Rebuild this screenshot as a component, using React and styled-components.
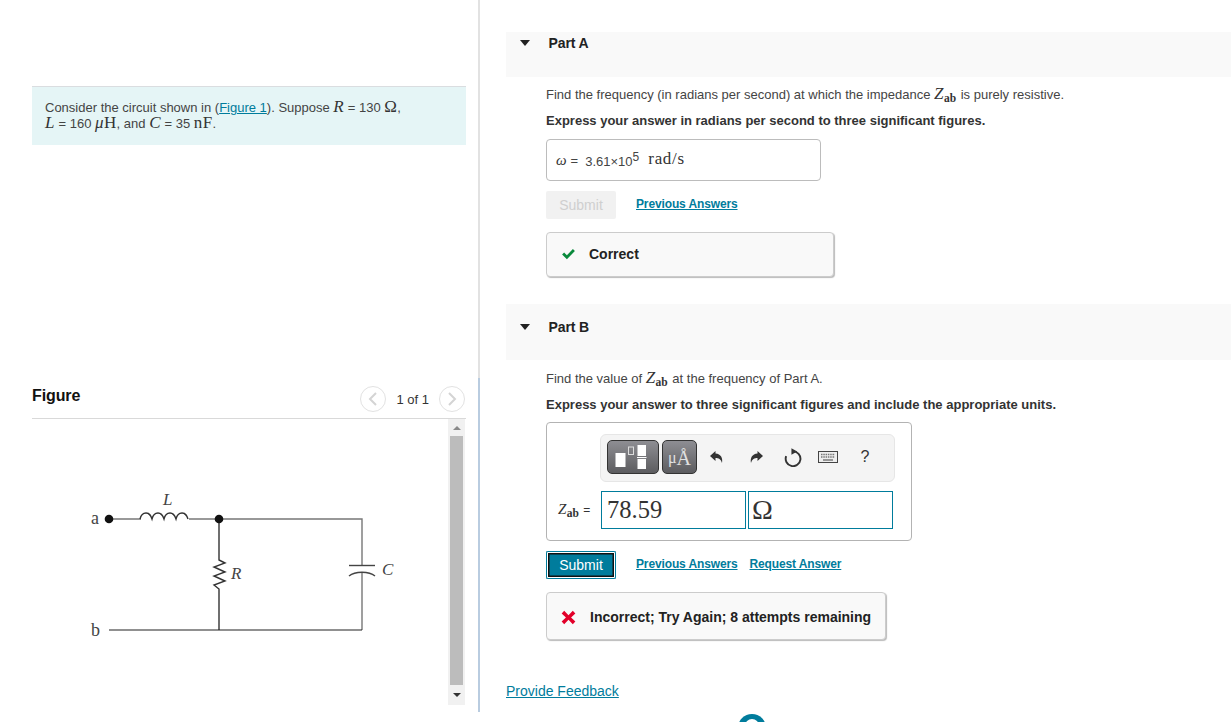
import React from "react";
import styled, { createGlobalStyle } from "styled-components";

const Global = createGlobalStyle`
  html, body { margin: 0; padding: 0; background: #fff; overflow: hidden; }
  body { font-family: "Liberation Sans", Arial, sans-serif; color: #333; }
`;
const Page = styled.div`display: flex; width: 1231px; height: 722px; overflow: hidden; position: relative;`;
const LeftPane = styled.section`width: 434px; padding: 86px 12px 0 32px; flex: none;`;
const Divider = styled.div`width: 2px; margin-right: 26px; flex: none; display: flex; flex-direction: column; height: 712px;`;
const DividerPart = styled.div`height: ${p => p.$h}px; background: ${p => p.$c}; flex: none;`;
const Intro = styled.div`
  height: 45px; padding: 13px 13px 0; background: #e5f5f6; border-top: 1px solid #dadde0;
  font-size: 13px; line-height: 16px; color: #444; width: 408px; box-sizing: content-box;
`;
const A = styled.a`color: #007c9c; text-decoration: underline;`;
const M = styled.span`font-family: "Liberation Serif", serif; font-size: 17px; letter-spacing: .4px; color: #333; line-height: 0;`;
const MI = styled(M)`font-style: italic;`;
const FigureHead = styled.header`
  margin-top: 234px; height: 39px; display: flex; align-items: flex-start; justify-content: space-between;
  border-bottom: 1px solid #d9d9d9; box-sizing: content-box;
`;
const FigureTitle = styled.h2`margin: 8px 0 0; font-size: 16px; line-height: 18px; font-weight: 700; color: #111; letter-spacing: -.1px;`;
const Pager = styled.div`display: flex; align-items: center; gap: 10px; margin: 7px 1px 0 0; font-size: 13px; color: #333;`;
const PageBtn = styled.span`width: 24px; height: 24px; border: 1px solid #e2e2e2; border-radius: 50%; display: flex; align-items: center; justify-content: center;`;
const FigureBody = styled.div`display: flex; height: 286px;`;
const Canvas = styled.div`flex: 1; min-width: 0;`;
const ScrollBar = styled.div`width: 17px; background: #f1f1f1; display: flex; flex-direction: column; align-items: center; flex: none; margin-right: 1px; box-sizing: border-box; padding: 7px 0 8px;`;
const Thumb = styled.div`width: 13px; height: 249px; background: #bcbcbc; margin: 6px 0;`;
const Tri = styled.span`width: 0; height: 0; border-left: 4px solid transparent; border-right: 4px solid transparent; ${p => p.$up ? "border-bottom: 4px solid #8a8a8a;" : "border-top: 4px solid #333;"} flex: none;`;
const TriSpacer = styled.div`flex: 1;`;

const RightPane = styled.main`flex: 1; min-width: 0; padding-top: 32px;`;
const PartHead = styled.div`
  height: ${p => p.$h}px; background: #f9f9f9; display: flex; align-items: flex-start; padding: ${p => p.$pt}px 0 0 14px; box-sizing: border-box;
  margin-top: ${p => p.$mt || 0}px; font-size: 14px; font-weight: 700; color: #222; line-height: 16px; letter-spacing: -.1px;
`;
const PartTitle = styled.span`margin-left: 18.5px;`;
const Caret = styled.span`width: 0; height: 0; margin-top: 5px; border-left: 5.5px solid transparent; border-right: 5.5px solid transparent; border-top: 6px solid #222;`;
const PartBody = styled.div`padding-left: 40px;`;
const Prompt = styled.p`margin: ${p => p.$mt}px 0 0; font-size: 13px; line-height: 16px; color: #444; white-space: nowrap;`;
const Strong = styled.p`margin: 10px 0 0; font-size: 13px; line-height: 16px; color: #333; font-weight: 700; white-space: nowrap;`;
const AnswerBox = styled.div`
  margin-top: 10px; width: 275px; height: 42px; box-sizing: border-box; border: 1px solid #bcbcbc; border-radius: 4px;
  display: flex; align-items: center; padding-left: 9px; font-size: 13px; color: #444; white-space: pre;
`;
const AnswerVar = styled(MI)`font-size: 15px;`;
const Sup = styled.sup`font-size: 12px; line-height: 0; vertical-align: 5px;`;
const Num = styled.span`margin: 2px 9px 0 7px;`;
const Unit = styled(M)`font-size: 17px; letter-spacing: .7px; padding-bottom: 2px;`;
const Actions = styled.div`display: flex; align-items: flex-start; margin-top: ${p => p.$mt}px;`;
const SubmitBtn = styled.button`
  width: 70px; height: 28px; padding: 0; border: 0; font: 14px "Liberation Sans", Arial, sans-serif; border-radius: 2px;
  background: ${p => p.$on ? "#007c9c" : "#f1f1f1"}; color: ${p => p.$on ? "#fff" : "#cfcfcf"};
  ${p => p.$on && "box-shadow: inset 0 0 0 1px #007c9c, inset 0 0 0 2px #fff, inset 0 0 0 3.5px #111;"}
`;
const ActionLink = styled(A)`font-size: 12px; font-weight: 700; line-height: 14px; margin: 6px 0 0 ${p => p.$ml}px; letter-spacing: -.13px;`;
const Feedback = styled.div`
  margin-top: ${p => p.$mt}px; width: ${p => p.$w}px; height: ${p => p.$h}px; box-sizing: border-box; display: flex; align-items: center;
  padding: ${p => p.$pt || 0}px 0 ${p => p.$pb || 0}px 14px; gap: ${p => p.$gap}px; background: #f9f9f9; border: 1px solid #ccc; border-radius: 4px;
  box-shadow: 1px 1px 1px #bbb; font-size: 14px; font-weight: 700; color: #222; white-space: nowrap;
`;
const WorkBox = styled.div`
  margin-top: 9px; width: 366px; height: 119px; box-sizing: border-box; border: 1px solid #b3b3b3; border-radius: 4px;
  padding: 11px 0 0 53px;
`;
const Toolbar = styled.div`
  width: 295px; height: 48px; box-sizing: border-box; background: #f4f4f4; border: 1px solid #e6e6e6; border-radius: 6px;
  display: flex; align-items: center; padding: 0 0 2px 6px;
`;
const TemplateBtn = styled.span`
  width: ${p => p.$w}px; height: 34px; box-sizing: border-box; margin-right: 3px; border: 1px solid #333; border-radius: 5px;
  background: linear-gradient(#8e8e93, #5c5c5f); display: flex; align-items: center; justify-content: center; color: #e0e0e0;
  font-family: "Liberation Serif", serif; font-size: 16px; flex: none; padding-top: 2px;
`;
const BigA = styled.span`font-size: 20px; line-height: 20px;`;
const ToolIcon = styled.span`width: ${p => p.$w}px; display: flex; justify-content: center; flex: none; color: #333; font-size: 16px;`;
const Entry = styled.div`display: flex; align-items: center; margin: 9px 0 0 -42px;`;
const ZLabel = styled.span`width: 43px; font-size: 12px; white-space: nowrap; color: #333; flex: none;`;
const ZM = styled(MI)`font-size: 15px;`;
const Field = styled.div`
  width: 145px; height: 38px; box-sizing: border-box; border: 1px solid #007c9c; margin-right: 2px; padding-left: ${p => p.$pl}px;
  font-family: "Liberation Serif", serif; font-size: ${p => p.$fs}px; line-height: 36px; color: #333;
`;
const FeedbackLink = styled(A)`display: inline-block; font-size: 14px; line-height: 16px; margin: 43px 0 0 0;`;
const HelpDot = styled.div`position: absolute; left: 738px; top: 714px; width: 28px; height: 28px; border-radius: 50%; background: #007c9c;`;
const HelpInner = styled.div`position: absolute; left: 745px; top: 719px; width: 14px; height: 14px; border-radius: 50%; background: #fff;`;
const Sub = styled.sub`font-family: "Liberation Serif", serif; font-size: 11.5px; font-weight: 700; line-height: 0; vertical-align: -3px; color: #333; margin-right: 1px;`;

const Check = () => (
  <svg width="15" height="12" viewBox="0 0 14 12"><path d="M.6 6.500l2-2 2.800 2.800L11.400 1l2 2-8 8.300z" fill="#0a8a3c" /></svg>
);
const Cross = () => (
  <svg width="15" height="15" viewBox="0 0 14 14"><path d="M3 .8L7 4.800 11 .8 13.400 3.200 9.400 7l4 3.800L11 13.200 7 9.200 3 13.200.6 10.800 4.600 7 .6 3.200z" fill="#e2002a" /></svg>
);
const Chev = ({ d, c }) => (
  <svg width="10" height="14" viewBox="0 0 10 14"><path d={d} fill="none" stroke={c} strokeWidth="2" /></svg>
);
const Circuit = () => (
  <svg width="416" height="286" viewBox="32 419 416 286">
    <g fill="none" stroke="#555" strokeWidth="1.2">
      <path d="M109 519H141" />
      <path d="M140 519c1-4 3-6 6-6 4 0 5 3 6 6 1-4 3-6 6-6s5 3 6 6c1-4 3-6 6-6s5 3 6 6c1-4 3-6 6-6 4 0 5 3 6 6" strokeWidth="1.4" stroke="#333" />
      <path d="M189 519h30" />
      <path d="M219 519H362V565M362 573V630" strokeWidth="1.4" stroke="#777" />
      <path d="M219 519V560l6 3-11 4 11 5-11 4 11 5-11 4 5 4V630" stroke="#333" strokeWidth="1.4" />
      <path d="M109 630H362" stroke="#222" />
      <path d="M349 565.5H375" stroke="#444" strokeWidth="1.4" />
      <path d="M349 576c6-5 20-5 26 0" stroke="#444" strokeWidth="1.4" />
    </g>
    <circle cx="109" cy="519" r="4.3" fill="#111" />
    <circle cx="219" cy="519" r="4.3" fill="#111" />
    <g fontFamily="'Liberation Serif', serif" fontSize="18" fill="#444">
      <text x="91" y="524">a</text>
      <text x="91" y="636">b</text>
      <text x="163" y="505" fontStyle="italic" fontSize="17">L</text>
      <text x="231" y="579" fontStyle="italic" fontSize="17">R</text>
      <text x="382" y="575" fontStyle="italic" fontSize="17">C</text>
    </g>
  </svg>
);

export default function App() {
  return (
    <Page>
      <Global />
      <LeftPane>
        <Intro>
          Consider the circuit shown in (<A>Figure 1</A>). Suppose <MI>R</MI> = 130 <M>Ω</M>,<br />
          <MI>L</MI> = 160 <M><i>μ</i>H</M>, and <MI>C</MI> = 35 <M>nF</M>.
        </Intro>
        <FigureHead>
          <FigureTitle>Figure</FigureTitle>
          <Pager>
            <PageBtn><Chev d="M8 1L2 7l6 6" c="#d4d4d4" /></PageBtn>
            <span>1 of 1</span>
            <PageBtn><Chev d="M2 1l6 6-6 6" c="#d4d4d4" /></PageBtn>
          </Pager>
        </FigureHead>
        <FigureBody>
          <Canvas><Circuit /></Canvas>
          <ScrollBar>
            <Tri $up />
            <Thumb />
            <TriSpacer />
            <Tri />
          </ScrollBar>
        </FigureBody>
      </LeftPane>
      <Divider>
        <DividerPart $h={378} $c="#e2e2e2" />
        <DividerPart $h={334} $c="#b9cce0" />
      </Divider>
      <RightPane>
        <PartHead $h={45} $pt={3}><Caret /><PartTitle>Part A</PartTitle></PartHead>
        <PartBody>
          <Prompt $mt={10}>Find the frequency (in radians per second) at which the impedance <MI>Z</MI><Sub>ab</Sub> is purely resistive.</Prompt>
          <Strong>Express your answer in radians per second to three significant figures.</Strong>
          <AnswerBox>
            <AnswerVar>ω</AnswerVar> =
            <Num>3.61×10<Sup>5</Sup></Num>
            <Unit>rad/s</Unit>
          </AnswerBox>
          <Actions $mt={10}>
            <SubmitBtn>Submit</SubmitBtn>
            <ActionLink $ml={20}>Previous Answers</ActionLink>
          </Actions>
          <Feedback $mt={13} $w={288} $h={45} $gap={13} $pb={2}><Check />Correct</Feedback>
        </PartBody>
        <PartHead $h={56} $pt={15} $mt={27}><Caret /><PartTitle>Part B</PartTitle></PartHead>
        <PartBody>
          <Prompt $mt={11}>Find the value of <MI>Z</MI><Sub>ab</Sub> at the frequency of Part A.</Prompt>
          <Strong>Express your answer to three significant figures and include the appropriate units.</Strong>
          <WorkBox>
            <Toolbar>
              <TemplateBtn $w={52}>
                <svg width="42" height="26" viewBox="0 0 42 26">
                  <rect x="3.500" y="8" width="10" height="14" fill="#fff" />
                  <rect x="16.500" y="2" width="5" height="7.500" fill="none" stroke="#ddd" />
                  <rect x="25.500" y="0" width="8.500" height="11" fill="#fff" />
                  <rect x="25" y="12" width="9.500" height="1.100" fill="#fff" />
                  <rect x="25.500" y="14" width="8.500" height="10" fill="#fff" />
                </svg>
              </TemplateBtn>
              <TemplateBtn $w={35}>μ<BigA>Å</BigA></TemplateBtn>
              <ToolIcon $w={34}>
                <svg width="16" height="16" viewBox="0 0 16 16"><path d="M6.500 2L1 7l5.500 5V9c3 0 5.500 1 6.500 5 1-5-1-9-6.500-9.500z" fill="#333" /></svg>
              </ToolIcon>
              <ToolIcon $w={44}>
                <svg width="16" height="16" viewBox="0 0 16 16"><path d="M9.500 2L15 7l-5.500 5V9c-3 0-5.500 1-6.500 5-1-5 1-9 6.500-9.500z" fill="#333" /></svg>
              </ToolIcon>
              <ToolIcon $w={28}>
                <svg width="19" height="19" viewBox="0 0 18 18"><path d="M9.500 3.200a7 7 0 1 1-6.500 4.500" fill="none" stroke="#333" strokeWidth="1.800" /><path d="M8 .2l5.500 3L8 6.500z" fill="#333" /></svg>
              </ToolIcon>
              <ToolIcon $w={44}>
                <svg width="20" height="12" viewBox="0 0 20 12"><rect x=".5" y=".5" width="19" height="11" fill="#eee" stroke="#444" /><path d="M3 3.500h14M3 6h14" stroke="#777" strokeWidth="1.300" strokeDasharray="1.500 .8" /><path d="M5 9h10" stroke="#666" strokeWidth="1.300" /></svg>
              </ToolIcon>
              <ToolIcon $w={30}>?</ToolIcon>
            </Toolbar>
            <Entry>
              <ZLabel><ZM>Z</ZM><Sub>ab</Sub> =</ZLabel>
              <Field $pl={5} $fs={24.5}>78.59</Field>
              <Field $pl={3} $fs={28}>Ω</Field>
            </Entry>
          </WorkBox>
          <Actions $mt={10}>
            <SubmitBtn $on>Submit</SubmitBtn>
            <ActionLink $ml={20}>Previous Answers</ActionLink>
            <ActionLink $ml={12}>Request Answer</ActionLink>
          </Actions>
          <Feedback $mt={13} $w={340} $h={48} $gap={14} $pt={2}><Cross />Incorrect; Try Again; 8 attempts remaining</Feedback>
        </PartBody>
        <FeedbackLink>Provide Feedback</FeedbackLink>
      </RightPane>
      <HelpDot />
      <HelpInner />
    </Page>
  );
}
